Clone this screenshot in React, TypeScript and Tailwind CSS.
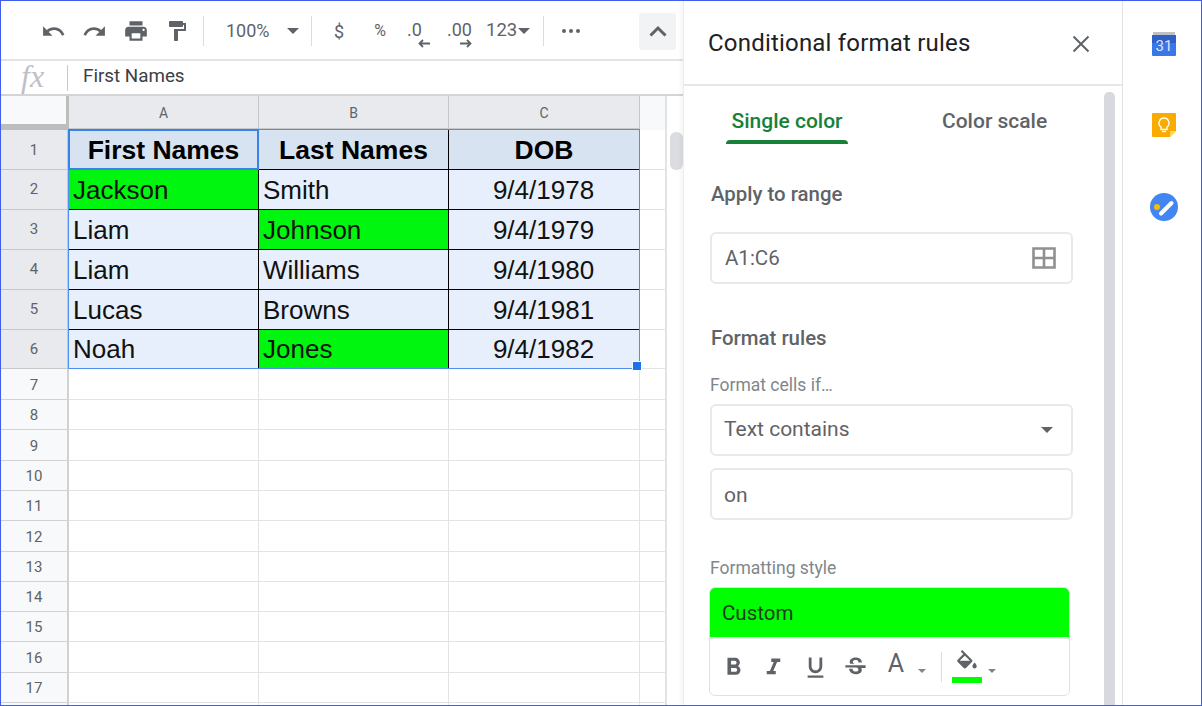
import React from "react";

const G = "#5f6368";
const Ico = ({ d, w = 24, cls = "" }: { d: string; w?: number; cls?: string }) => (
  <svg width={w} height={w} viewBox="0 0 24 24" fill={G} className={cls}>
    <path d={d} />
  </svg>
);
const undo = "M12.5 8c-2.65 0-5.05.99-6.9 2.6L2 7v9h9l-3.62-3.62c1.39-1.16 3.16-1.88 5.12-1.88 3.54 0 6.55 2.31 7.6 5.5l2.37-.78C21.08 11.03 17.15 8 12.5 8z";
const redo = "M18.4 10.6C16.55 8.99 14.15 8 11.5 8c-4.65 0-8.58 3.03-9.96 7.22L3.9 16c1.05-3.19 4.05-5.5 7.6-5.5 1.95 0 3.73.72 5.12 1.88L13 16h9V7l-3.6 3.6z";
const print = "M19 8H5c-1.66 0-3 1.34-3 3v6h4v4h12v-4h4v-6c0-1.66-1.34-3-3-3zm-3 11H8v-5h8v5zm3-7c-.55 0-1-.45-1-1s.45-1 1-1 1 .45 1 1-.45 1-1 1zm-1-9H6v4h12V3z";
const paint = "M18 4V3c0-.55-.45-1-1-1H5c-.55 0-1 .45-1 1v4c0 .55.45 1 1 1h12c.55 0 1-.45 1-1V6h1v4H9v11c0 .55.45 1 1 1h2c.55 0 1-.45 1-1v-9h8V4h-3z";
const bucket = "M16.56 8.94L7.62 0 6.21 1.41l2.38 2.38-5.15 5.15c-.59.59-.59 1.54 0 2.12l5.5 5.5c.29.29.68.44 1.06.44s.77-.15 1.06-.44l5.5-5.5c.59-.58.59-1.53 0-2.12zM5.21 10L10 5.21 14.79 10H5.21zM19 11.5s-2 2.17-2 3.5c0 1.1.9 2 2 2s2-.9 2-2c0-1.33-2-3.5-2-3.5z";
const bold = "M15.6 10.79c.97-.67 1.65-1.77 1.65-2.79 0-2.26-1.75-4-4-4H7v14h7.04c2.09 0 3.71-1.7 3.71-3.79 0-1.52-.86-2.82-2.15-3.42zM10 6.5h3c.83 0 1.5.67 1.5 1.5s-.67 1.5-1.5 1.5h-3v-3zm3.5 9H10v-3h3.5c.83 0 1.5.67 1.5 1.5s-.67 1.5-1.5 1.5z";
const italic = "M10 4v3h2.21l-3.42 8H6v3h8v-3h-2.21l3.42-8H18V4z";
const under = "M12 17c3.31 0 6-2.69 6-6V3h-2.5v8c0 1.93-1.57 3.5-3.5 3.5S8.5 12.93 8.5 11V3H6v8c0 3.31 2.69 6 6 6zm-7 2v2h14v-2H5z";
const strike = "M6.85 7.08C6.85 4.37 9.45 3 12.24 3c1.64 0 3 .49 3.9 1.28.77.65 1.46 1.73 1.46 3.24h-3.01c0-.31-.05-.59-.15-.85-.29-.86-1.2-1.28-2.35-1.28-2.04 0-2.4 1.06-2.4 1.58 0 .84.72 1.35 1.28 1.6H7.27c-.19-.3-.42-.74-.42-1.49zM21 12v-2H3v2h9.62c1.15.45 1.96.75 1.96 1.97 0 1-.81 1.67-2.28 1.67-1.54 0-2.93-.54-2.93-2.51H6.4c0 .55.08 1.13.24 1.58.81 2.29 3.32 3.3 5.67 3.3 2.25 0 5.27-.98 5.27-3.57 0-.6-.15-1.15-.44-1.97H21z";

const Caret = ({ cls = "" }: { cls?: string }) => (
  <span className={"w-0 h-0 border-x-[6px] border-x-transparent border-t-[6px] border-t-[#5f6368] " + cls} />
);
const Tiny = ({ cls = "" }: { cls?: string }) => (
  <span className={"w-0 h-0 shrink-0 border-x-[4px] border-x-transparent border-t-[4px] border-t-[#80868b] " + cls} />
);
const Slot = ({ children }: { children: React.ReactNode }) => (
  <div className="w-[41px] flex items-center justify-center shrink-0">{children}</div>
);
const Div = ({ cls = "" }: { cls?: string }) => <div className={"w-px h-[30px] bg-[#dadce0] shrink-0 " + cls} />;

const Arrow = ({ left }: { left?: boolean }) => (
  <svg width="12" height="9" viewBox="0 0 12 9" fill="none" stroke={G} strokeWidth="1.8" className={left ? "" : "rotate-180"}>
    <path d="M12 4.5H2M5 1 1.5 4.5 5 8" />
  </svg>
);

function Toolbar() {
  return (
    <div className="h-[56px] pt-[2px] flex items-center pl-[32px] border-b-2 border-[#e3e3e3] shrink-0 text-[#5f6368] font-['Roboto',sans-serif] box-content">
      <Slot><Ico d={undo} w={25} /></Slot>
      <Slot><Ico d={redo} w={25} /></Slot>
      <Slot><Ico d={print} w={26} /></Slot>
      <Slot><Ico d={paint} w={24} /></Slot>
      <Div cls="ml-[6px]" />
      <div className="w-[107px] flex items-center shrink-0">
        <span className="ml-[22px] w-[46px] text-[18px] -mt-[2px]">100%</span>
        <Caret cls="ml-[15px]" />
      </div>
      <Div />
      <div className="w-[54px] text-center text-[18px] shrink-0">$</div>
      <div className="w-[28px] text-center text-[16px] shrink-0">%</div>
      <div className="w-[54px] shrink-0 flex flex-col items-start pl-[13px] leading-none">
        <span className="text-[18px] h-[17px] leading-[17px] mt-[7px]">.0</span>
        <span className="ml-[11px] mt-[1px]"><Arrow left /></span>
      </div>
      <div className="w-[28px] shrink-0 flex flex-col items-start leading-none -ml-[1px]">
        <span className="text-[18px] h-[17px] leading-[17px] mt-[7px]">.00</span>
        <span className="ml-[13px] mt-[1px]"><Arrow /></span>
      </div>
      <div className="ml-[11px] w-[56px] shrink-0 flex items-center">
        <span className="text-[18.5px]">123</span>
        <Caret cls="ml-[1px]" />
      </div>
      <Div cls="ml-[1px]" />
      <div className="w-[54px] flex justify-center gap-[2.5px] shrink-0">
        <span className="w-[4.5px] h-[4.5px] rounded-full bg-[#5f6368]" />
        <span className="w-[4.5px] h-[4.5px] rounded-full bg-[#5f6368]" />
        <span className="w-[4.5px] h-[4.5px] rounded-full bg-[#5f6368]" />
      </div>
      <div className="ml-[41px] w-[37px] h-[37px] rounded-[3px] bg-[#f1f3f4] flex items-center justify-center shrink-0">
        <svg width="20" height="14" viewBox="0 0 20 14" fill="none" stroke={G} strokeWidth="3"><path d="M2.5 11.5 10 4l7.5 7.5" /></svg>
      </div>
    </div>
  );
}

function FormulaBar() {
  return (
    <div className="h-[33px] flex items-center shrink-0 border-b-2 border-[#d4d4d4] box-content">
      <span className="w-[66px] pl-[20px] font-['Liberation_Serif',serif] italic text-[32px] leading-none text-[#bdc1c6] -mt-[3px]">fx</span>
      <div className="w-px h-[26px] bg-[#c8c8c8]" />
      <span className="ml-[15px] text-[18.8px] text-[#3c4043] font-['Roboto',sans-serif] -mt-[3px]">First Names</span>
    </div>
  );
}

const DATA: [string, string, string, number][] = [
  ["Jackson", "Smith", "9/4/1978", 0],
  ["Liam", "Johnson", "9/4/1979", 1],
  ["Liam", "Williams", "9/4/1980", -1],
  ["Lucas", "Browns", "9/4/1981", -1],
  ["Noah", "Jones", "9/4/1982", 1],
];
const RH = [40, 40, 40, 40, 39];
const EMPTY = [31, 30, 31, 30, 30, 31, 30, 30, 30, 31, 30, 30];

function Sheet() {
  const green = "bg-[#00f50f]";
  const base = "bg-[#e6effb]";
  const num = "font-['Roboto',sans-serif] text-[15px] text-[#5f6368]";
  return (
    <div className="relative flex-1 overflow-hidden font-['Liberation_Sans',Arial,sans-serif]">
      <div className="flex h-[34px] font-['Roboto',sans-serif] text-[14px] text-[#5f6368]">
        <div className="w-[68px] bg-[#f8f9fa] border-r-[3px] border-b-[6px] border-[#bdbdbd] box-border" />
        {["A", "B", "C"].map((c, i) => (
          <div key={c} className={"bg-[#e8eaed] border-r border-b-2 border-r-[#c4c7c5] border-b-[#c8c8c8] flex items-center justify-center pt-[2px] " + (i === 2 ? "w-[191px]" : "w-[190px]")}>{c}</div>
        ))}
        <div className="w-[27px] bg-[#f8f9fa] border-r-2 border-[#e3e3e3]" />
      </div>
      <div className="flex h-[40px] text-black">
        <div className={"w-[68px] bg-[#e8eaed] border-r-2 border-b border-[#c8c8c8] flex items-center justify-center pt-[2px] " + num}>1</div>
        {["First Names", "Last Names", "DOB"].map((t, i) => (
          <div key={t} className={"bg-[#d8e3f1] border-r border-b border-black flex items-center justify-center pt-[2px] text-[26.5px] font-bold " + (i === 2 ? "w-[191px]" : "w-[190px]")}>{t}</div>
        ))}
        <div className="w-[27px] border-r-2 border-b border-[#e3e3e3]" />
      </div>
      {DATA.map((r, i) => (
        <div key={i} className="flex text-[26px] text-[#111] leading-none" style={{ height: RH[i] }}>
          <div className={"w-[68px] bg-[#e8eaed] border-r-2 border-b border-[#c8c8c8] flex items-center justify-center " + num}>{i + 2}</div>
          <div className={"w-[190px] border-r border-b border-black flex items-center pl-[4px] " + (r[3] === 0 ? green : base)}>{r[0]}</div>
          <div className={"w-[190px] border-r border-b border-black flex items-center pl-[4px] " + (r[3] === 1 ? green : base)}>{r[1]}</div>
          <div className={"w-[191px] border-r border-b border-black flex items-center justify-center pr-[1px] " + base}>{r[2]}</div>
          <div className="w-[27px] border-r-2 border-b border-[#e3e3e3]" />
        </div>
      ))}
      {EMPTY.map((h, i) => (
        <div key={i} className="flex" style={{ height: h }}>
          <div className={"w-[68px] bg-[#f8f9fa] border-r-2 border-b border-[#d2d2d2] flex items-center justify-center pt-[2px] " + num}>{i < 11 ? i + 7 : ""}</div>
          <div className="w-[190px] border-r border-b border-[#e2e3e3]" />
          <div className="w-[190px] border-r border-b border-[#e2e3e3]" />
          <div className="w-[191px] border-r border-b border-[#e2e3e3]" />
          <div className="w-[27px] border-r-2 border-b border-[#e3e3e3]" />
        </div>
      ))}
      <div className="absolute left-[67px] top-[33px] w-[572px] h-[240px] border border-[#4d90ee] pointer-events-none" />
      <div className="absolute left-[67px] top-[33px] w-[191px] h-[41px] border-2 border-[#3b82e8] pointer-events-none" />
      <div className="absolute left-[631px] top-[265px] w-[8px] h-[8px] bg-[#1a73e8] border border-white box-content" />
      <div className="absolute left-[669px] top-[36px] w-[13px] h-[38px] rounded-[6px] bg-[#dadce0]" />
    </div>
  );
}

const Label = ({ children, cls = "" }: { children: React.ReactNode; cls?: string }) => (
  <div className={"ml-[1px] font-medium text-[20.4px] leading-[24px] text-[#5f6368] " + cls}>{children}</div>
);
const Small = ({ children, cls = "" }: { children: React.ReactNode; cls?: string }) => (
  <div className={"text-[17.5px] leading-[20px] text-[#80868b] " + cls}>{children}</div>
);

function Panel() {
  return (
    <div className="w-[439px] shrink-0 flex flex-col font-['Roboto',sans-serif] border-l border-[#eceded] shadow-[-2px_0_4px_rgba(60,64,67,0.06)] z-10 bg-white">
      <div className="h-[83px] shrink-0 border-b-2 border-[#e6e7e8] box-content flex items-center justify-between pl-[24px] pr-[30px]">
        <span className="text-[24px] text-[#202124] tracking-[0.2px]">Conditional format rules</span>
        <svg width="22" height="22" viewBox="0 0 22 22" stroke={G} strokeWidth="2" className="mt-[3px]"><path d="M3.5 3.5l15 15M18.5 3.5l-15 15" /></svg>
      </div>
      <div className="flex-1 relative overflow-hidden pl-[26px]">
        <div className="absolute right-[7px] top-[6px] bottom-0 w-[11px] rounded-t-[5px] bg-[#d7d9de]" />
        <div className="flex h-[60px] text-[21px]">
          <div className="w-[122px] ml-[16px] flex flex-col items-center">
            <span className="mt-[21px] leading-[28px] text-[#188038] font-medium">Single color</span>
            <span className="mt-[5px] w-[122px] h-[4px] rounded-t-[4px] bg-[#188038]" />
          </div>
          <span className="ml-[94px] mt-[21px] leading-[28px] text-[#5f6368] font-medium">Color scale</span>
        </div>
        <Label cls="mt-[36px]">Apply to range</Label>
        <div className="mt-[26px] w-[363px] h-[52px] border-2 border-[#e8e9ea] rounded-[6px] flex items-center justify-between pl-[13px] pr-[15px] text-[20.5px] text-[#5f6368]">
          <span>A1:C6</span>
          <svg width="24" height="22" viewBox="0 0 24 22" fill="none" stroke="#909090" strokeWidth="2.6"><path d="M1.5 1.5h21v19h-21zM12 1.5v19M1.5 11h21" /></svg>
        </div>
        <Label cls="mt-[42px]">Format rules</Label>
        <Small cls="mt-[25px]">Format cells if…</Small>
        <div className="mt-[9px] w-[363px] h-[52px] border-2 border-[#e8e9ea] rounded-[6px] flex items-center justify-between pl-[12px] pr-[18px] text-[21px] text-[#5f6368]">
          <span>Text contains</span>
          <Caret />
        </div>
        <div className="mt-[12px] w-[363px] h-[52px] border-2 border-[#e8e9ea] rounded-[6px] flex items-center pl-[12px] pt-[3px] text-[21px] text-[#5f6368]">on</div>
        <Small cls="mt-[38px]">Formatting style</Small>
        <div className="mt-[9px] w-[361px] border border-[#dfe0e2] rounded-[6px] overflow-hidden -ml-[1px]">
          <div className="h-[49px] bg-[#00ff00] flex items-center pl-[12px] pt-[2px] text-[20.5px] text-[#1f3d1f]">Custom</div>
          <div className="h-[58px] border-t-2 border-[#e6e7e8] flex items-center text-[#5f6368] box-border">
            <Ico d={bold} w={29} cls="ml-[9px] shrink-0" />
            <Ico d={italic} w={27} cls="ml-[12px] shrink-0" />
            <Ico d={under} w={27} cls="ml-[15px] shrink-0" />
            <Ico d={strike} w={27} cls="ml-[13px] shrink-0" />
            <span className="ml-[17px] w-[20px] text-center text-[25px] -mt-[6px]">A</span>
            <Tiny cls="ml-[12px] mt-[8px]" />
            <Div cls="ml-[15px]" />
            <div className="ml-[10px] w-[30px] flex flex-col items-center">
              <Ico d={bucket} w={26} cls="-mt-[2px]" />
              <span className="w-[30px] h-[6px] bg-[#00ff00] mt-[1px]" />
            </div>
            <Tiny cls="ml-[6px] mt-[8px]" />
          </div>
        </div>
      </div>
    </div>
  );
}

function Rail() {
  return (
    <div className="flex-1 flex flex-col items-center pl-[3px]">
      <svg width="24" height="24" viewBox="0 0 24 24" className="mt-[31px]">
        <rect x="1" y="0" width="22" height="4" fill="#bdc1c6" />
        <rect x="0" y="3" width="24" height="21" rx="1" fill="#3b78e7" />
        <rect x="0" y="3" width="24" height="8" fill="#2f5fc9" />
        <text x="12" y="19" textAnchor="middle" fontSize="15" fontFamily="Roboto, sans-serif" fill="#dbe6fb">31</text>
      </svg>
      <svg width="24" height="24" viewBox="0 0 24 24" className="mt-[57px]">
        <path d="M1 0h22a1 1 0 0 1 1 1v17l-6 6H1a1 1 0 0 1-1-1V1a1 1 0 0 1 1-1z" fill="#f9ab00" />
        <path d="M24 18l-6 6v-6z" fill="#fdd663" />
        <path d="M12 5a5 5 0 0 0-3 9v2.5h6V14a5 5 0 0 0-3-9z" fill="none" stroke="#fff" strokeWidth="1.4" />
        <path d="M10 18.5h4" stroke="#fff" strokeWidth="1.4" />
      </svg>
      <svg width="28" height="28" viewBox="0 0 28 28" className="mt-[56px]">
        <circle cx="14" cy="14" r="14" fill="#4285f4" />
        <path d="M11 20.5 21.5 10" stroke="#fff" strokeWidth="4" strokeLinecap="round" />
        <circle cx="7" cy="14" r="3" fill="#fbbc04" />
      </svg>
    </div>
  );
}

export default function App() {
  return (
    <div className="w-[1202px] h-[706px] border border-[#3f5ef0] box-border flex overflow-hidden bg-white">
      <div className="w-[682px] shrink-0 flex flex-col">
        <Toolbar />
        <FormulaBar />
        <Sheet />
      </div>
      <Panel />
      <div className="w-px bg-[#e3e4e6] shrink-0" />
      <Rail />
    </div>
  );
}
